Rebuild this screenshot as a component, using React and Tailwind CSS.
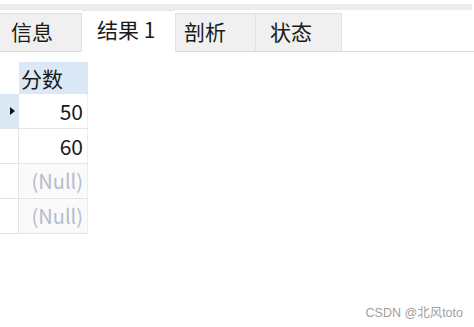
export default function App() {
  const font = { fontFamily: '"Noto Sans CJK SC", "Noto Sans", sans-serif' };
  const wm = { fontFamily: '"Liberation Sans", "Noto Sans CJK SC", sans-serif' };
  const rows = [
    { v: "50", sel: true, nul: false },
    { v: "60", sel: false, nul: false },
    { v: "(Null)", sel: false, nul: true },
    { v: "(Null)", sel: false, nul: true },
  ];
  return (
    <div className="relative w-[474px] h-[327px] bg-white overflow-hidden text-[#1a1a1a]" style={font}>
      <div className="h-[4px]" />
      <div className="h-[6px] mr-[2px] bg-[#ececec]" />
      <div className="flex items-end h-[42px] border-b border-[#dcdcdc]">
        <div className="w-[82px] h-[38px] bg-[#f0f0f0] border-t border-r border-[#e2e2e2] flex items-center pl-[11px] text-[21px] leading-none pb-[2px]">
          信息
        </div>
        <div className="w-[93px] h-[42px] bg-white border-t border-[#e6e6e6] flex items-start pt-[8px] pl-[15px] text-[21px] leading-none -mb-px">
          结果 1
        </div>
        <div className="w-[81px] h-[38px] bg-[#f0f0f0] border-t border-l border-r border-[#e2e2e2] flex items-center pl-[8px] text-[21px] leading-none pb-[2px]">
          剖析
        </div>
        <div className="w-[86px] h-[38px] bg-[#f0f0f0] border-t border-r border-[#e2e2e2] flex items-center pl-[14px] text-[21px] leading-none pb-[2px]">
          状态
        </div>
      </div>
      <div className="mt-[10px] flex flex-col w-[88px]">
        <div className="flex h-[32px]">
          <div className="w-[19px]" />
          <div className="w-[69px] bg-[#dbe9f6] flex items-center pl-[2px] text-[21px] leading-none">
            分数
          </div>
        </div>
        {rows.map((r, i) => (
          <div key={i} className="flex h-[35px] border-b border-[#e4e4e4]">
            <div
              className={
                r.sel
                  ? "w-[19px] bg-[#dbe9f6] border-r border-[#e4e4e4] flex items-center justify-end pr-[3px]"
                  : "w-[19px] bg-white border-r border-[#e4e4e4]"
              }
            >
              {r.sel && (
                <svg width="5" height="8" viewBox="0 0 5 8">
                  <path d="M0 0 L5 4 L0 8 Z" fill="#111" />
                </svg>
              )}
            </div>
            <div
              className={
                r.nul
                  ? "w-[69px] bg-[#fafafb] border-r border-[#eeeeee] flex items-center justify-end pr-[4px] text-[20px] leading-none text-[#b4bccb]"
                  : "w-[69px] bg-white border-r border-[#eeeeee] flex items-center justify-end pr-[4px] text-[21px] leading-none"
              }
            >
              {r.v}
            </div>
          </div>
        ))}
      </div>
      <div className="absolute right-[11px] bottom-[8px] text-[12.5px] leading-none text-[#a0a0a0]" style={wm}>
        CSDN @北风toto
      </div>
    </div>
  );
}
